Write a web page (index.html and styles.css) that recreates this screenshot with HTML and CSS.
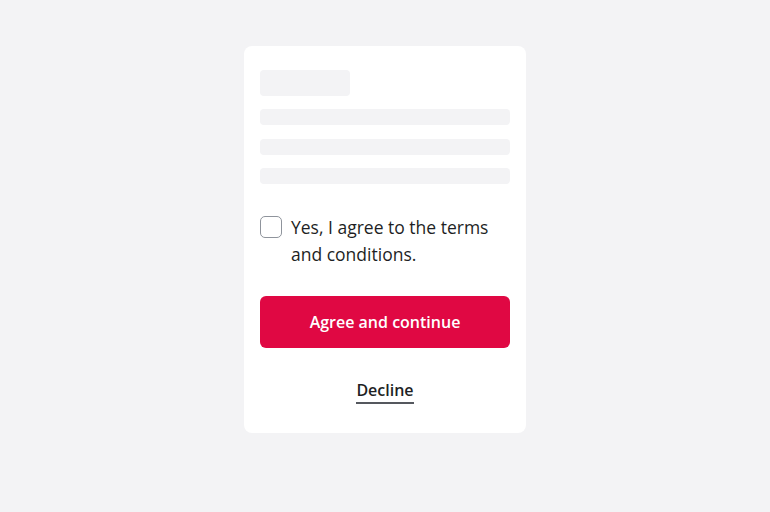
FILE: index.html
```html
<!DOCTYPE html>
<html lang="en">
<head>
    <meta charset="UTF-8">
    <meta name="viewport" content="width=device-width, initial-scale=1.0">
    <title>Terms and conditions</title>
    <link rel="stylesheet" href="styles.css">
</head>
<body>
    <div class="card">
        <div class="skeleton">
            <div class="bone bone-title"></div>
            <div class="bone bone-line"></div>
            <div class="bone bone-line"></div>
            <div class="bone bone-line"></div>
        </div>
        <label class="consent">
            <input type="checkbox" class="consent-box">
            <span class="consent-text">Yes, I agree to the terms and conditions.</span>
        </label>
        <button class="primary">Agree and continue</button>
        <div class="secondary">
            <a href="#" class="decline">Decline</a>
        </div>
    </div>
</body>
</html>
```

FILE: styles.css
```css
body {
    margin: 0;
    padding-top: 46px;
    background-color: #f3f3f5;
    font-family: "Open Sans", "Noto Sans", sans-serif;
    color: #1e1f24;
    display: flex;
    justify-content: center;
}

.card {
    width: 282px;
    box-sizing: border-box;
    background-color: #ffffff;
    border-radius: 8px;
    padding: 24px 16px 29px;
}

.skeleton {
    display: flex;
    flex-direction: column;
    gap: 13.5px;
}

.bone {
    background-color: #f3f3f5;
    border-radius: 4px;
}

.bone-title {
    width: 90px;
    height: 26px;
    margin-bottom: -0.5px;
}

.bone-line {
    height: 16px;
}

.consent {
    display: flex;
    align-items: flex-start;
    gap: 9px;
    margin-top: 30px;
    cursor: pointer;
}

.consent-box {
    appearance: none;
    -webkit-appearance: none;
    flex: none;
    width: 22px;
    height: 22px;
    margin: 1.5px 0 0;
    border: 1.5px solid #8f949c;
    border-radius: 5px;
    background-color: #fff;
}

.consent-text {
    font-size: 17.5px;
    line-height: 27px;
}

.primary {
    display: block;
    width: 100%;
    height: 52px;
    margin-top: 28px;
    border: none;
    border-radius: 6px;
    background-color: #e00843;
    color: #fff;
    font-family: inherit;
    font-size: 16px;
    font-weight: 600;
    cursor: pointer;
}

.secondary {
    margin-top: 30px;
    text-align: center;
    line-height: 24px;
}

.decline {
    display: inline-block;
    font-size: 16px;
    font-weight: 600;
    color: #1e1f24;
    text-decoration: none;
    border-bottom: 2px solid #55585e;
}
```
